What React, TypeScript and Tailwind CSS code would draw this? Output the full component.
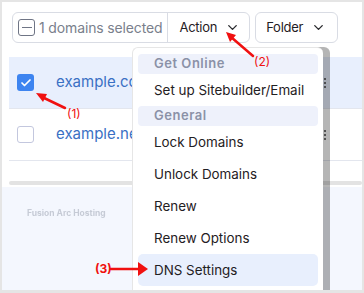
import { Check, ChevronDown } from 'lucide-react';

const font = { fontFamily: 'Inter, "Noto Sans", sans-serif' };

function MenuHeader({ label }: { label: string }) {
  return (
    <div className="mx-[5px] flex h-[20px] items-center rounded-sm bg-[#eef1fb] pl-[16px] text-[13px] font-semibold tracking-[0.04em] text-[#8b91a7]">
      {label}
    </div>
  );
}

function MenuItem({ label, active }: { label: string; active?: boolean }) {
  return (
    <div
      className={`mx-[5px] flex h-[32px] items-center rounded-[5px] pl-[16px] text-[13.4px] text-[#1f2023] ${
        active ? 'bg-[#e8effd]' : ''
      }`}
    >
      {label}
    </div>
  );
}

function Row({ name, checked }: { name: string; checked?: boolean }) {
  return (
    <div
      className={`ml-[7px] flex h-[52px] items-center border-b border-[#e3e6ee] pl-[8px] ${
        checked ? 'bg-[#e8effd]' : 'bg-white'
      }`}
    >
      {checked ? (
        <span className="flex h-[17px] w-[17px] items-center justify-center rounded-[3px] bg-[#3d84f0]">
          <Check size={12} strokeWidth={3.5} className="text-white" />
        </span>
      ) : (
        <span className="h-[17px] w-[17px] rounded-[3px] border border-[#c3c7de] bg-white" />
      )}
      <span className="ml-[22px] text-[15px] text-[#3a70c4]">{name}</span>
      <span className="ml-auto mr-[36px] flex flex-col gap-[2px]">
        <span className="h-[2px] w-[2px] rounded-full bg-[#444]" />
        <span className="h-[2px] w-[2px] rounded-full bg-[#444]" />
        <span className="h-[2px] w-[2px] rounded-full bg-[#444]" />
      </span>
    </div>
  );
}

export default function App() {
  return (
    <div className="h-[293px] w-[364px] bg-[#e5e5e5] pb-[3px] pl-[2px] pr-[2px] pt-[2px]" style={font}>
      <div className="relative h-full w-full overflow-hidden bg-white">
        {/* toolbar */}
        <div className="flex gap-[5px] pl-[10px] pt-[10px]">
          <div className="flex h-[31px] items-center rounded-[6px] border border-[#d9dce4]">
            <span className="ml-[5px] flex h-[17px] w-[17px] items-center justify-center rounded-[3px] border-[1.5px] border-[#6f7585]">
              <span className="h-[1.5px] w-[10px] bg-[#6f7585]" />
            </span>
            <span className="ml-[4px] text-[14px] tracking-[-0.01em] text-[#7a7f8c]">1 domains selected</span>
            <span className="ml-[5px] h-full w-px bg-[#d9dce4]" />
            <span className="ml-[11px] text-[13px] tracking-[-0.02em] text-[#1f2023]">Action</span>
            <ChevronDown size={15} strokeWidth={2.2} className="ml-[8px] mr-[9px] text-[#2a2b2e]" />
          </div>
          <div className="flex h-[31px] items-center rounded-[6px] border border-[#d9dce4] pl-[10px]">
            <span className="text-[13px] tracking-[-0.02em] text-[#1f2023]">Folder</span>
            <ChevronDown size={15} strokeWidth={2.2} className="ml-[8px] mr-[11px] text-[#2a2b2e]" />
          </div>
        </div>

        {/* table */}
        <div className="mt-[14px]">
          <Row name="example.com" checked />
          <Row name="example.net" />
        </div>
        <div className="ml-[7px] mt-[20px] h-[4px] rounded-full bg-[#e3e3e3]" />
        <div className="mt-[2px] h-[110px] bg-[#f4f7fe] pl-[25px] pt-[22px]">
          <span className="block text-[8.5px] font-bold leading-none text-[#c6cbd6] blur-[0.3px]">Fusion Arc Hosting</span>
        </div>

        {/* dropdown menu */}
        <div className="absolute left-[130px] top-[45px] h-[260px] w-[191px] rounded-t-[6px] border-l border-t border-[#e6e6e6] bg-white pt-[6px] shadow-[7px_0_0_rgba(0,0,0,0.29)]">
          <MenuHeader label="Get Online" />
          <MenuItem label="Set up Sitebuilder/Email" />
          <MenuHeader label="General" />
          <MenuItem label="Lock Domains" />
          <MenuItem label="Unlock Domains" />
          <MenuItem label="Renew" />
          <MenuItem label="Renew Options" />
          <MenuItem label="DNS Settings" active />
        </div>

        {/* annotations */}
        <svg className="pointer-events-none absolute left-0 top-0" width="360" height="288" viewBox="0 0 360 288">
          <g stroke="#f01010" strokeWidth="2.5" fill="#f01010" strokeLinecap="round">
            <line x1="63" y1="106" x2="40" y2="95" />
            <polygon points="34,91 45,92 41,100" stroke="none" />
            <line x1="251" y1="54" x2="229" y2="35" />
            <polygon points="224,30 234,33 228,40" stroke="none" />
            <line x1="109" y1="267" x2="138" y2="267" />
            <polygon points="146,267 136,260 136,274" stroke="none" />
          </g>
        </svg>
        <span className="absolute left-[65px] top-[106px] text-[12px] leading-none text-[#f01010]">(1)</span>
        <span className="absolute left-[252px] top-[54px] text-[12px] leading-none text-[#f01010]">(2)</span>
        <span className="absolute left-[93px] top-[261px] text-[12px] font-bold leading-none text-[#f01010]">(3)</span>
      </div>
    </div>
  );
}
